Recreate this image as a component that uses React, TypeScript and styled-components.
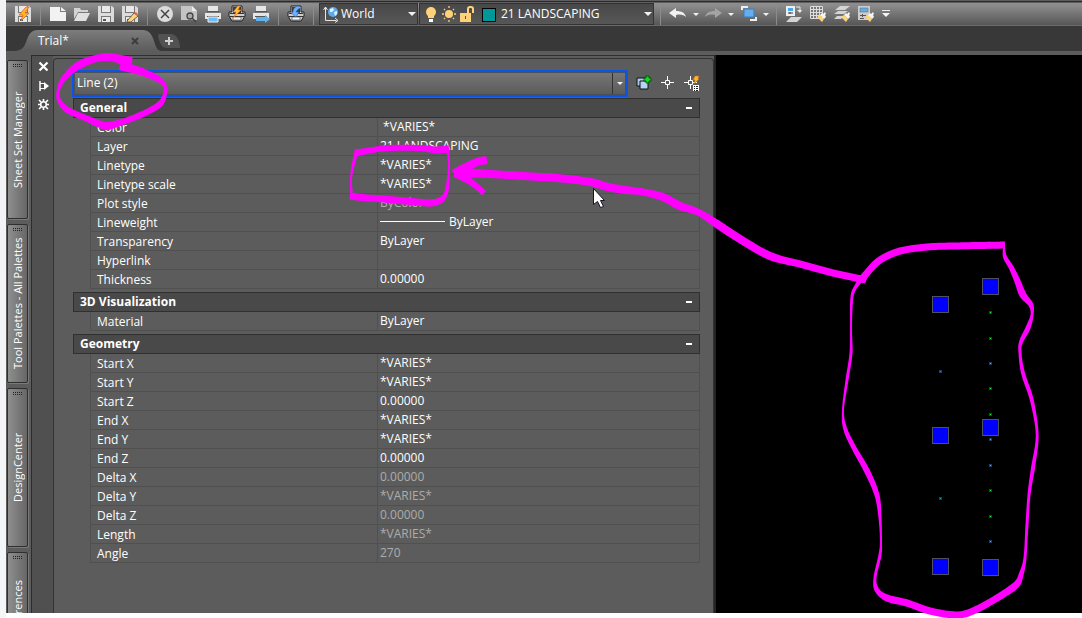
import React from "react";
import styled, { createGlobalStyle } from "styled-components";

const GlobalStyle = createGlobalStyle`
  * { box-sizing: border-box; }
  body {
    margin: 0;
    background: #fff;
    font-family: "Open Sans", "Noto Sans", sans-serif;
    font-size: 12px;
    line-height: 16px;
    color: #fff;
  }
  button, select {
    font: inherit;
    color: inherit;
    margin: 0;
    padding: 0;
    border: 0;
    background: none;
  }
`;

const Page = styled.div`
  position: relative;
  display: flex;
  flex-direction: column;
  height: 100vh;
  padding: 0 0 5px 6px;
  background: linear-gradient(#f2f2f4, #f5f6f8) left / 6px 100% no-repeat #fff;
  overflow: hidden;
`;

/* ---------- quick access toolbar ---------- */

const Toolbar = styled.header`
  display: flex;
  align-items: stretch;
  height: 26px;
  padding: 2px 0 1px 5px;
  border-top: 1px solid #5e5e5e;
  background: linear-gradient(#2e2a2e 0 1px, #8f8f8f 2px, #8a8a8a 5px, #565656 24px, #6a6a6a 24px);
  flex: none;
`;

const ToolButton = styled.button<{ $narrow?: boolean }>`
  display: flex;
  align-items: center;
  justify-content: center;
  width: ${(p) => (p.$narrow ? 11 : 24)}px;
  flex: none;
`;

const Separator = styled.span`
  width: 1px;
  margin: 0 5px;
  background: #8c8c8c;
  flex: none;
`;

const ToolCombo = styled.div<{ $width: number }>`
  display: flex;
  align-items: center;
  width: ${(p) => p.$width}px;
  margin-right: 1px;
  padding: 0 1px 0 3px;
  border: 1px solid #333;
  background: linear-gradient(#484848, #575757);
  flex: none;
`;

const PlainSelect = styled.select`
  appearance: none;
  flex: 1;
  min-width: 0;
  height: 18px;
  outline: none;
`;

const Swatch = styled.span`
  width: 14px;
  height: 14px;
  margin: 2px 5px 0 5px;
  border: 1px solid #000;
  background: #009999;
`;

/* ---------- drawing tabs ---------- */

const FileTabs = styled.nav`
  display: flex;
  align-items: center;
  height: 29px;
  padding: 0 0 0 7px;
  background: #383838;
  border-bottom: 4px solid #5c5c5c;
  flex: none;
`;

const FileTab = styled.div`
  position: relative;
  display: flex;
  align-items: center;
  justify-content: space-between;
  width: 149px;
  height: 25px;
  padding: 4px 23px 0 25px;
`;

const TabShape = styled.svg`
  position: absolute;
  left: 0;
  top: 0;
`;

const TabLabel = styled.button`
  position: relative;
`;

const TabClose = styled.button`
  position: relative;
  display: flex;
`;

const NewTab = styled.button`
  display: flex;
  margin: 5px 0 0 -5px;
`;

/* ---------- work area ---------- */

const Work = styled.div`
  display: flex;
  flex: 1;
  min-height: 0;
  overflow: hidden;
`;

const Dock = styled.aside`
  display: flex;
  flex-direction: column;
  gap: 5px;
  width: 25px;
  padding: 5px 3px 0 1px;
  background: #5c5c5c;
  overflow: hidden;
  flex: none;
`;

const DockTab = styled.button`
  display: flex;
  flex-direction: column;
  align-items: center;
  height: 159px;
  padding: 3px 0 7px;
  border: 1px solid #2f2f2f;
  border-radius: 2px;
  box-shadow: 1px 1px 0 #7a7a7a;
  background: linear-gradient(90deg, #8f8f8f, #666);
  font-size: 11px;
  flex: none;
`;

const DockLabel = styled.span`
  flex: 1;
  display: flex;
  align-items: center;
  justify-content: center;
  writing-mode: vertical-rl;
  transform: rotate(180deg);
  white-space: nowrap;
`;

const TitleBar = styled.div`
  display: flex;
  flex-direction: column;
  align-items: center;
  gap: 6px;
  width: 22px;
  padding-top: 4px;
  border-left: 1px solid #2c2c2c;
  border-top: 1px solid #2c2c2c;
  background: #505050;
  flex: none;
`;

const TitleButton = styled.button`
  display: flex;
  padding: 1px 0 1px 1px;
`;

const Palette = styled.section`
  flex: 0 0 663px;
  display: flex;
  padding-top: 3px;
  background: linear-gradient(#2f2f2f 0 1px, #5c5c5c 1px);
  border-right: 2px solid #242424;
`;

const PaletteBody = styled.div`
  flex: 1;
  padding: 11px 13px 0 18px;
  border: 1px solid #333;
  border-bottom: 0;
  border-radius: 4px 4px 0 0;
  background: #5c5c5c;
`;

const ObjectRow = styled.div`
  display: flex;
  align-items: center;
  height: 27px;
`;

const ObjectCombo = styled.div`
  display: flex;
  flex: 1;
  height: 27px;
  border: 2px solid #0a55e8;
  outline: 1px solid #4a4f5c;
  outline-offset: -3px;
  background: linear-gradient(#777, #5a5a5a);
`;

const ObjectSelect = styled.select`
  appearance: none;
  flex: 1;
  padding: 0 3px 2px;
  outline: none;
`;

const ComboArrow = styled.span`
  display: flex;
  align-items: center;
  justify-content: center;
  width: 14px;
  border-left: 1px solid #333;
`;

const ObjectTools = styled.div`
  display: flex;
  gap: 7px;
  padding: 0 0 2px 7px;
`;

const ObjectButton = styled.button`
  display: flex;
`;

const Group = styled.section`
  margin: 1px 0 3px 1px;
  & + & { margin-top: 0; }
`;

const GroupHeader = styled.button`
  display: flex;
  align-items: center;
  justify-content: space-between;
  width: 100%;
  height: 20px;
  padding: 0 7px 0 6px;
  border: 1px solid #303030;
  background: #494949;
  font-weight: 700;
`;

const Minus = styled.span`
  width: 6px;
  height: 2px;
  background: #fff;
`;

const Grid = styled.table`
  width: calc(100% - 17px);
  margin-left: 17px;
  border-collapse: separate;
  border-spacing: 0;
  table-layout: fixed;
  border-left: 1px solid #505050;
  border-right: 1px solid #505050;
`;

const NameCell = styled.th`
  width: 286px;
  height: 19px;
  padding: 1px 0 0 6px;
  border-bottom: 1px solid #505050;
  font-weight: 400;
  text-align: left;
  line-height: 17px;
`;

const ValueCell = styled.td<{ $muted?: boolean }>`
  height: 19px;
  padding: 0 0 1px 2px;
  border-left: 1px solid #505050;
  border-bottom: 1px solid #505050;
  color: ${(p) => (p.$muted ? "#acacac" : "#fff")};
  line-height: 17px;
`;

const LineSample = styled.span`
  display: inline-block;
  width: 65px;
  height: 1px;
  margin-right: 4px;
  background: #fff;
  vertical-align: 4px;
`;

const Canvas = styled.main`
  flex: 1;
  min-width: 0;
  background: #000;
  overflow: hidden;
`;

const Markup = styled.svg`
  position: absolute;
  left: 0;
  top: 0;
  pointer-events: none;
`;

/* ---------- icons ---------- */

const Icon = ({ children, size = 18 }: { children: React.ReactNode; size?: number }) => (
  <svg width={size} height={size} viewBox={`0 0 ${size} ${size}`} aria-hidden="true">{children}</svg>
);

const Floppy = () => (
  <>
    <path d="M1 1h14l2 2v14H1z" fill="#dcdcdc" />
    <path d="M4 1h10v7H4zM4 11h10v6H4z" fill="#777" />
    <path d="M5 1h8v6H5zM5 12h8v5H5z" fill="#e8e8e8" />
    <path d="M6 14h3v2H6z" fill="#555" />
  </>
);
const Bolt = ({ x = 0, y = 0 }: { x?: number; y?: number }) => (
  <path transform={`translate(${x} ${y})`} d="M8 0L1 8h4l-2 6 8-8H7l4-6z" fill="#ffb52e" stroke="#e8641b" strokeWidth=".8" />
);
const Caret = ({ w = 6 }: { w?: number }) => (
  <svg width={w} height={w / 2} viewBox="0 0 6 3" aria-hidden="true"><path d="M0 0h6L3 3z" fill="#f2f2f2" /></svg>
);
const Printer = () => (
  <>
    <path d="M4 1h10v5H4zM1 8h16v6H1z" fill="#e6e6e6" />
    <path d="M3 6h12v1H3zM3 11h12v1H3z" fill="#555" />
  </>
);
const Plotter = () => (
  <>
    <path d="M4 1h10v6h3v4l-3 5H4l-3-5V7h3z" fill="#cfcfcf" stroke="#222" />
    <path d="M5 2h8v6H5z" fill="#3a3a3a" />
    <path d="M2 8h14v1H2zM2 11h14v1H2z" fill="#333" />
    <path d="M5 12h8v3H5z" fill="#f4f4f4" stroke="#444" strokeWidth=".6" />
  </>
);
const Brush = () => (
  <>
    <path d="M8 12l3-2 4 4-2 3z" fill="#ffd27a" />
    <path d="M11 10l2-2 1 1 2-2 1 2-1 1 1 2-2 2z" fill="#f4f4f4" />
  </>
);

const icons: Record<string, React.ReactNode> = {
  autosave: <><Floppy /><Bolt x={4} y={2} /></>,
  new: <path d="M1 2h10v5h6v9H1zM12 2l5 4h-5z" fill="#f2f2f2" />,
  open: <><path d="M1 3h6l1 2h7v2H5L1 14z" fill="#d4d4d4" /><path d="M5 8h12l-4 8H1z" fill="#e0e0e0" /></>,
  save: <Floppy />,
  saveAs: <><Floppy /><path d="M6 16l7-8 4 3-7 6H6z" fill="#ffd27a" stroke="#444" strokeWidth=".8" /><path d="M13 8l2-1 2 2v2z" fill="#e7644d" /></>,
  close: <><circle cx="9" cy="9" r="8" fill="#dcdcdc" /><path d="M5 5l8 8M13 5l-8 8" stroke="#444" strokeWidth="1.5" /></>,
  preview: <><path d="M1 1h11l5 5v9H1z" fill="#c4c4c4" /><path d="M12 1l5 5h-5z" fill="#eee" /><circle cx="10" cy="11" r="3" fill="#aaa" stroke="#444" strokeWidth="1.3" /><path d="M12 13l4 4" stroke="#444" strokeWidth="1.6" /></>,
  print: <><Printer /><path d="M4 12h10v5H4z" fill="#6bbcf7" stroke="#eee" /></>,
  plot: <><Plotter /><path d="M10 1L5 7h3l-2 5 7-7h-3l2-4z" fill="#ffc23a" stroke="#e8741b" strokeWidth=".6" /></>,
  send: <><Printer /><path d="M4 12h9v-2l5 4-5 4v-2H4z" fill="#5fb4f0" /></>,
  publish: <><Plotter /><path d="M4 8l5 4 3-5-3 0c1-2 3-4 6-4-4-4-9-1-9 4z" fill="#6fb0fa" stroke="#2a60ae" strokeWidth=".6" /></>,
  undo: <path d="M0 8l7-5v3c6 0 9 2 10 6-2-2-5-3-10-2v3z" fill="#f2f2f2" />,
  redo: <path d="M18 8l-7-5v3C5 6 2 8 1 12c2-2 5-3 10-2v3z" fill="#a4a4a4" />,
  workspace: <><path d="M2 2h7M3 1v4M18 15h-7M17 16v-4" stroke="#eee" strokeWidth="2" /><path d="M5 4h10v8H5z" fill="#64aef0" stroke="#357fc0" /></>,
  match: <><path d="M1 1h9v10H1z" fill="#eee" /><path d="M3 3h5v3H3z" fill="#4aa9ee" /><path d="M3 8h5M5 7v2" stroke="#444" /><path d="M11 2h4v4" stroke="#eee" fill="none" /><path d="M12 5h5l-2 3z" fill="#eee" /><path d="M6 12h11l-5 5H1z" fill="#d4d4d4" /></>,
  table: <><path d="M1.500 1.500h12v12h-12z" fill="#777" stroke="#ddd" /><path d="M1 4.500h13M1 7.500h13M1 10.500h13M4.500 1v13M7.500 1v13M10.500 1v13" stroke="#ddd" /><Brush /></>,
  layers: <><path d="M7 1h10l-5 4H2zM5 6h10l-4 3H1zM4 11h7l-3 3H1z" fill="#d4d4d4" /><Brush /></>,
  properties: <><path d="M1 1h12v14H1z" fill="#ccc" /><path d="M3 3h8v4H3z" fill="#5db0ee" stroke="#666" strokeWidth=".5" /><path d="M3 10.500h6M3 13.500h4M5.500 9v3" stroke="#555" /><Brush /></>,
  more: <><path d="M1 5h8v1H1z" fill="#eee" /><path d="M1 8h8l-4 4z" fill="#f4f4f4" /></>,
  ucs: <><path d="M2.500 2v13.500h11M.5 5l2-3 2 3M12 13l3 2.500-3 2" fill="none" stroke="#e6e6e6" /><circle cx="10" cy="7" r="5" fill="#5aabf0" /><path d="M7 4l3-1 1 2-2 2-2 0zM11 7l3-1v3l-2 2z" fill="#e2f2ff" /></>,
  bulb: <><circle cx="8" cy="7" r="5" fill="#ffd27a" /><path d="M5 9h6v4H5z" fill="#ffd27a" /><path d="M6 14h4v3H6z" fill="#fff" /></>,
  sun: <><circle cx="8" cy="9" r="4" fill="#ffd27a" /><path d="M8 1v2M8 15v2M1 9h2M13 9h2M3 4l1 1M12 13l1 1M13 4l-1 1M4 13l-1 1" stroke="#ffd27a" strokeWidth="1.300" /></>,
  lock: <><path d="M1 8h11v9H1z" fill="#ffd27a" /><path d="M9 8V4q0-2 2-2h1q2 0 2 2v4" fill="none" stroke="#ffd27a" strokeWidth="2" /><path d="M6 11h1v3H6z" fill="#555" /></>,
  x: <path d="M1.500 1.500l8 8M9.500 1.500l-8 8" stroke="#fff" strokeWidth="2.200" />,
  pin: <><path d="M2 1v10" stroke="#fff" strokeWidth="1.500" /><path d="M2 3.500h5M2 8.500h5" stroke="#fff" /><path d="M6 2l5 4-5 4z" fill="#fff" /></>,
  gear: <><circle cx="5.500" cy="5.500" r="2.800" fill="none" stroke="#fff" strokeWidth="1.600" /><path d="M5.500 0v2M5.500 9v2M0 5.500h2M9 5.500h2M1 1l2 2M10 1L8 3M1 10l2-2M10 10L8 8" stroke="#fff" strokeWidth="1.600" /></>,
  pickAdd: <><path d="M2 4h8v8H2z" fill="#a9c9ee" stroke="#111" /><path d="M5 7h8v8H5z" fill="#b5d3f4" stroke="#111" /><path d="M9 4h2V2h3v2h2v3h-2v2h-3V7H9z" fill="#1ed02a" stroke="#053f08" strokeWidth=".8" /></>,
  select: <path d="M8.500 2v4M8.500 11v4M2 8.500h4M11 8.500h4M6.500 6.500h4v4h-4z" fill="none" stroke="#fff" />,
  quick: <><path d="M7.500 2v4M7.500 11v4M1 8.500h4M10 8.500h4M5.500 6.500h4v4h-4z" fill="none" stroke="#fff" /><path d="M12 2h4l-1 3h1l-5 5 1-4h-2z" fill="#ffb52e" stroke="#c96812" strokeWidth=".6" /><path d="M10 11h6v6h-6z" fill="#fff" /><path d="M11 12.500h1M13 12.500h2M11 14.500h1M13 14.500h2M11 16.500h1M13 16.500h2" stroke="#222" /></>,
};

const Tool = ({ icon, label }: { icon: string; label: string }) => (
  <ToolButton aria-label={label} title={label}><Icon>{icons[icon]}</Icon></ToolButton>
);
const Drop = ({ label }: { label: string }) => (
  <ToolButton $narrow aria-label={label}><Caret /></ToolButton>
);

/* ---------- properties ---------- */

type Prop = { name: string; value: React.ReactNode; muted?: boolean };

const groups: { title: string; rows: Prop[] }[] = [
  {
    title: "General",
    rows: [
      { name: "Color", value: <>&nbsp;*VARIES*</> },
      { name: "Layer", value: "21 LANDSCAPING" },
      { name: "Linetype", value: "*VARIES*" },
      { name: "Linetype scale", value: "*VARIES*" },
      { name: "Plot style", value: "ByColor", muted: true },
      { name: "Lineweight", value: <><LineSample />ByLayer</> },
      { name: "Transparency", value: "ByLayer" },
      { name: "Hyperlink", value: "" },
      { name: "Thickness", value: "0.00000" },
    ],
  },
  { title: "3D Visualization", rows: [{ name: "Material", value: "ByLayer" }] },
  {
    title: "Geometry",
    rows: [
      { name: "Start X", value: "*VARIES*" },
      { name: "Start Y", value: "*VARIES*" },
      { name: "Start Z", value: "0.00000" },
      { name: "End X", value: "*VARIES*" },
      { name: "End Y", value: "*VARIES*" },
      { name: "End Z", value: "0.00000" },
      { name: "Delta X", value: "0.00000", muted: true },
      { name: "Delta Y", value: "*VARIES*", muted: true },
      { name: "Delta Z", value: "0.00000", muted: true },
      { name: "Length", value: "*VARIES*", muted: true },
      { name: "Angle", value: "270", muted: true },
    ],
  },
];

const grips = [[224, 249], [274, 231], [224, 380], [274, 372], [224, 511], [274, 512]];
const dots = [257, 283, 308, 333, 359, 384, 410, 435, 461, 486];

/* ---------- freehand markup ---------- */

type Pt = [number, number, number];

// Smooth curve through points, as cubic segments that continue from the first point.
const curve = (p: number[][]) =>
  p.slice(1).map((b, i) => {
    const a = p[i], z = p[i - 1] || a, c = p[i + 2] || b;
    const n = [a[0] + (b[0] - z[0]) / 6, a[1] + (b[1] - z[1]) / 6, b[0] - (c[0] - a[0]) / 6, b[1] - (c[1] - a[1]) / 6, b[0], b[1]];
    return "C" + n.map((v) => v.toFixed(1)).join(" ");
  }).join("");

// Outline of a pen stroke whose width is given at each point.
const ribbon = (pts: Pt[]) => {
  const side = (s: number) =>
    pts.map(([x, y, w], i) => {
      const a = pts[Math.max(0, i - 1)], b = pts[Math.min(pts.length - 1, i + 1)];
      const dx = b[0] - a[0], dy = b[1] - a[1], l = Math.hypot(dx, dy) || 1;
      return [x - (s * dy * w) / l / 2, y + (s * dx * w) / l / 2];
    });
  const left = side(1), right = side(-1).reverse();
  return `M${left[0].join(" ")}${curve(left)}L${right[0].join(" ")}${curve(right)}Z`;
};

const strokes: Pt[][] = [
  [[132, 62, 10], [125, 61, 10], [115, 58, 8], [106, 57, 8], [94, 59, 7], [81, 64, 8], [71, 71, 7], [62, 81, 5], [58, 92, 3], [59, 100, 4], [66, 109, 6], [83, 117, 6], [97, 123, 7], [107, 126, 8], [125, 121, 6], [145, 113, 6], [160, 104, 6], [165, 94, 4], [165, 86, 4], [158, 79, 6], [145, 73, 7], [133, 69, 8], [120, 66, 8]],
  [[355, 153, 7], [367, 151, 6], [388, 148, 6], [420, 148, 6], [436, 150, 7], [449, 149, 7]],
  [[448, 148, 3], [449, 165, 2], [448, 182, 3], [446, 193, 4], [441, 200, 6], [431, 203, 7], [417, 202, 7], [383, 199, 7], [367, 198, 7], [350, 196, 7]],
  [[357, 150, 4], [353, 166, 3], [351, 180, 2], [352, 199, 3]],
  [[454, 174, 8], [466, 173, 9], [490, 174, 8], [523, 176, 8], [557, 178, 8], [590, 182, 8], [608, 187, 8], [625, 190, 8], [643, 192, 7], [663, 197, 8], [680, 206, 8], [698, 212, 7], [717, 224, 8], [740, 239, 8], [770, 256, 8], [800, 264, 7], [833, 273, 7], [866, 280, 7]],
  [[454, 174, 9], [467, 167, 9], [477, 162, 8], [487, 160, 8]],
  [[456, 173, 9], [468, 180, 7], [476, 186, 6], [484, 193, 6]],
  [[862, 280, 8], [867, 273, 7], [880, 260, 7], [900, 251, 7], [927, 247, 7], [953, 246, 7], [1005, 245, 7]],
  [[1004, 247, 2], [1005, 257, 4], [1011, 267, 5], [1017, 280, 6], [1023, 295, 7], [1031, 305, 5], [1032, 315, 3], [1028, 328, 5], [1021, 342, 4], [1020, 353, 3], [1023, 373, 4], [1031, 397, 4], [1036, 422, 3], [1037, 441, 3], [1033, 468, 4], [1029, 495, 3], [1027, 525, 3], [1025, 558, 3], [1021, 575, 5], [1016, 585, 7], [997, 598, 7], [973, 611, 7], [956, 615, 7], [930, 611, 7], [907, 603, 7], [887, 598, 7], [877, 590, 5], [875, 578, 3], [880, 555, 3], [881, 541, 2], [880, 518, 3], [877, 495, 5], [867, 471, 6], [853, 446, 5], [845, 428, 4], [843, 410, 2], [847, 380, 3], [851, 353, 3], [851, 327, 2], [852, 297, 3], [857, 285, 4], [866, 274, 6]],
];

const Grip = () => (
  <svg width="9" height="4" viewBox="0 0 9 4" aria-hidden="true">
    <path d="M0 .5h9M0 2.500h9" stroke="#222" strokeDasharray="1 1" />
  </svg>
);

export default function App() {
  return (
    <Page>
      <GlobalStyle />
      <Toolbar>
        <Tool icon="autosave" label="Autosave" />
        <Separator />
        <Tool icon="new" label="New" />
        <Tool icon="open" label="Open" />
        <Tool icon="save" label="Save" />
        <Tool icon="saveAs" label="Save As" />
        <Separator />
        <Tool icon="close" label="Close" />
        <Tool icon="preview" label="Plot Preview" />
        <Tool icon="print" label="Plot" />
        <Tool icon="plot" label="Quick Plot" />
        <Tool icon="send" label="Export" />
        <Separator />
        <Tool icon="publish" label="Publish" />
        <Separator />
        <ToolCombo $width={99}>
          <Icon>{icons.ucs}</Icon>
          <PlainSelect aria-label="Coordinate system"><option>World</option></PlainSelect>
          <Caret w={8} />
        </ToolCombo>
        <ToolCombo $width={235}>
          <Icon>{icons.bulb}</Icon>
          <Icon>{icons.sun}</Icon>
          <Icon>{icons.lock}</Icon>
          <Swatch />
          <PlainSelect aria-label="Layer"><option>21 LANDSCAPING</option></PlainSelect>
          <Caret w={8} />
        </ToolCombo>
        <Separator />
        <Tool icon="undo" label="Undo" />
        <Drop label="Undo history" />
        <Tool icon="redo" label="Redo" />
        <Drop label="Redo history" />
        <Tool icon="workspace" label="Workspace" />
        <Drop label="Workspace list" />
        <Separator />
        <Tool icon="match" label="Match Properties" />
        <Tool icon="table" label="Table" />
        <Tool icon="layers" label="Layer Match" />
        <Tool icon="properties" label="Properties" />
        <Tool icon="more" label="Customize" />
      </Toolbar>

      <FileTabs aria-label="Drawings">
        <FileTab>
          <TabShape width="149" height="25" viewBox="0 0 149 25" aria-hidden="true">
            <defs>
              <linearGradient id="tab" x1="0" y1="0" x2="0" y2="1">
                <stop offset="0" stopColor="#7c7c7c" />
                <stop offset="1" stopColor="#5c5c5c" />
              </linearGradient>
            </defs>
            <path d="M0 25C12 25 12 18 15 11Q18 4 24 4H130Q136 4 139 10C143 18 142 25 149 25Z" fill="url(#tab)" />
          </TabShape>
          <TabLabel>Trial*</TabLabel>
          <TabClose aria-label="Close tab">
            <svg width="8" height="8" viewBox="0 0 8 8"><path d="M1 1l6 6M7 1L1 7" stroke="#3c3c3c" strokeWidth="2" /></svg>
          </TabClose>
        </FileTab>
        <NewTab aria-label="New tab">
          <svg width="24" height="16" viewBox="0 0 24 16">
            <path d="M2 1h12c5 0 9 6 9 14H10C5 15 4 12 2 7Q0 2 2 1z" fill="#525252" />
            <path d="M12 4v8M8 8h8" stroke="#cfcfcf" strokeWidth="2" />
          </svg>
        </NewTab>
      </FileTabs>

      <Work>
        <Dock>
          {["Sheet Set Manager", "Tool Palettes - All Palettes", "DesignCenter", "External References"].map((t) => (
            <DockTab key={t}><Grip /><DockLabel>{t}</DockLabel></DockTab>
          ))}
        </Dock>
        <TitleBar>
          <TitleButton aria-label="Close palette"><Icon size={11}>{icons.x}</Icon></TitleButton>
          <TitleButton aria-label="Auto-hide"><Icon size={11}>{icons.pin}</Icon></TitleButton>
          <TitleButton aria-label="Palette settings"><Icon size={11}>{icons.gear}</Icon></TitleButton>
        </TitleBar>
        <Palette aria-label="Properties">
          <PaletteBody>
            <ObjectRow>
              <ObjectCombo>
                <ObjectSelect aria-label="Selected objects"><option>Line (2)</option></ObjectSelect>
                <ComboArrow><Caret /></ComboArrow>
              </ObjectCombo>
              <ObjectTools>
                <ObjectButton aria-label="Toggle pick add"><Icon size={17}>{icons.pickAdd}</Icon></ObjectButton>
                <ObjectButton aria-label="Select objects"><Icon size={17}>{icons.select}</Icon></ObjectButton>
                <ObjectButton aria-label="Quick select"><Icon size={17}>{icons.quick}</Icon></ObjectButton>
              </ObjectTools>
            </ObjectRow>
            {groups.map((g) => (
              <Group key={g.title}>
                <GroupHeader aria-expanded="true">{g.title}<Minus /></GroupHeader>
                <Grid aria-label={g.title}>
                  <tbody>
                    {g.rows.map((r) => (
                      <tr key={r.name}>
                        <NameCell scope="row">{r.name}</NameCell>
                        <ValueCell $muted={r.muted}>{r.value}</ValueCell>
                      </tr>
                    ))}
                  </tbody>
                </Grid>
              </Group>
            ))}
          </PaletteBody>
        </Palette>
        <Canvas aria-label="Model space">
          <svg width="366" height="558" viewBox="0 0 366 558" aria-hidden="true">
            {dots.map((y) => (
              <g key={y}><rect x="273" y={y - 1} width="3" height="3" fill="#123f78" /><rect x="274" y={y} width="1" height="1" fill="#20f020" /></g>
            ))}
            {[316, 443].map((y) => (
              <g key={y}><rect x="223" y={y - 1} width="3" height="3" fill="#123f78" /><rect x="224" y={y} width="1" height="1" fill="#10a0a0" /></g>
            ))}
            {grips.map(([x, y]) => (
              <rect key={`${x}-${y}`} x={x - 7.5} y={y - 7.5} width="16" height="16" fill="#0000ff" stroke="#505060" />
            ))}
          </svg>
        </Canvas>
      </Work>

      <Markup width="1082" height="618" viewBox="0 0 1082 618" aria-hidden="true">
        {strokes.map((s, i) => <path key={i} d={ribbon(s)} fill="#ff00ff" />)}
        <path d="M593.500 188.500v16l4-3 3 6 3-1-3-6h4z" fill="#fff" stroke="#15152a" />
      </Markup>
    </Page>
  );
}
